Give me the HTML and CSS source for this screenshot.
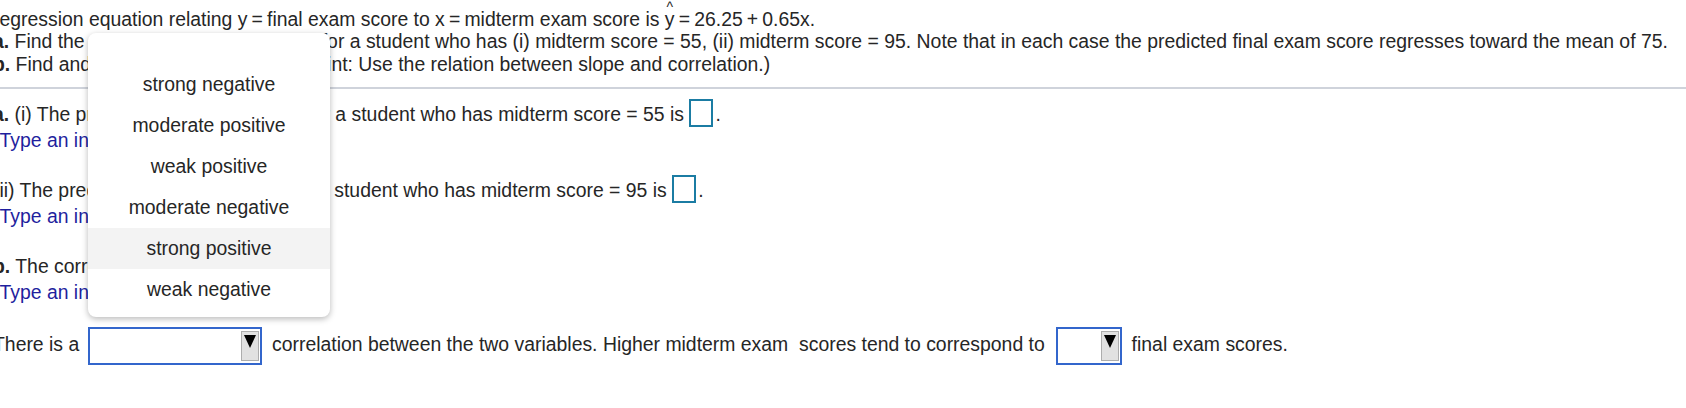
FILE: index.html
```html
<!DOCTYPE html>
<html>
<head>
  <meta charset="UTF-8">
  <title>Regression and correlation</title>
  <link rel="stylesheet" href="styles.css">
</head>
<body>
  <div class="page">
    <div class="intro">
      <div>regression equation relating y<span class="op"> = </span>final exam score to x<span class="op"> = </span>midterm exam score is <span class="yhat">y<span class="hat">^</span></span><span class="op"> = </span>26.25<span class="op"> + </span>0.65x.</div>
      <div><b>a.</b> Find the predicted final exam score for a student who has (i) midterm score = 55, (ii) midterm score = 95. Note that in each case the predicted final exam score regresses toward the mean of 75.</div>
      <div><b>b.</b> Find and interpret the correlation. (Hint: Use the relation between slope and correlation.)</div>
    </div>
    <div class="rule"></div>

    <div class="part">
      <div><b>a.</b> (i) The predicted final exam score for a student who has midterm score = 55 is <span class="answer"></span>.</div>
      <div class="hint">(Type an integer or a decimal.)</div>
    </div>
    <div class="part">
      <div>(ii) The predicted final exam score for a student who has midterm score = 95 is <span class="answer"></span>.</div>
      <div class="hint">(Type an integer or a decimal.)</div>
    </div>
    <div class="part">
      <div><b>b.</b> The correlation is <span class="answer"></span>.</div>
      <div class="hint">(Type an integer or a decimal.)</div>
    </div>

    <div class="blanks">
      There is a
      <span class="select wide">
        <span class="select-btn">
          <svg width="12" height="13" viewBox="0 0 12 13"><polygon points="0,0 12,0 6,13" fill="#000"/></svg>
        </span>
      </span>
      correlation between the two variables. Higher midterm exam&nbsp; scores tend to correspond to
      <span class="select narrow">
        <span class="select-btn">
          <svg width="12" height="13" viewBox="0 0 12 13"><polygon points="0,0 12,0 6,13" fill="#000"/></svg>
        </span>
      </span>
      final exam scores.
    </div>
  </div>

  <div class="listbox">
    <div class="option">strong negative</div>
    <div class="option">moderate positive</div>
    <div class="option">weak positive</div>
    <div class="option">moderate negative</div>
    <div class="option active">strong positive</div>
    <div class="option">weak negative</div>
  </div>
</body>
</html>
```

FILE: styles.css
```css
body {
  margin: 0;
  position: relative;
  font-family: "Liberation Sans", Arial, sans-serif;
  font-size: 19.4px;
  color: #262626;
  background-color: #fff;
}

.page {
  margin-left: -7px;
  white-space: nowrap;
}

.intro {
  padding-top: 7.5px;
  line-height: 22.5px;
}

/* math operators sit a little tighter than words */
.op {
  word-spacing: -1.25px;
}

.yhat {
  position: relative;
}

.hat {
  position: absolute;
  left: 50%;
  top: -8px;
  transform: translateX(-50%);
  font-size: 14px;
  line-height: 14px;
}

.rule {
  height: 2px;
  margin-top: 12px;
  background-color: #cfd3db;
}

.part {
  line-height: 26px;
  margin-top: 24px;
}

.rule + .part {
  margin-top: 12.3px;
}

.hint {
  color: #1f1f9e;
}

.answer {
  display: inline-block;
  box-sizing: border-box;
  width: 24px;
  height: 28px;
  margin: -3px 2px 0 0;
  border: 2px solid #1b7ca3;
  vertical-align: -6px;
}

.blanks {
  line-height: 26px;
  margin-top: 21.7px;
}

.select {
  display: inline-flex;
  justify-content: flex-end;
  box-sizing: border-box;
  height: 38px;
  margin: 0 4.6px 0 3.4px;
  padding: 2px 1px 2px 0;
  border: 2px solid #3366cc;
  background-color: #fff;
  vertical-align: middle;
}

.select.wide {
  width: 174px;
}

.select.narrow {
  width: 66px;
  margin-left: 5.5px;
}

.select-btn {
  display: flex;
  justify-content: center;
  box-sizing: border-box;
  width: 18px;
  height: 30px;
  padding-top: 3px;
  border: 1px solid #adadad;
  background-color: #e1e1e1;
}

.listbox {
  position: absolute;
  left: 88px;
  top: 33px;
  width: 242px;
  box-sizing: border-box;
  padding: 30.5px 0 7px;
  border-radius: 8px;
  background-color: #fff;
  box-shadow: 0 2px 6px rgba(0, 0, 0, 0.28);
}

.option {
  height: 41px;
  line-height: 41px;
  text-align: center;
}

.option.active {
  background-color: #f3f3f3;
}
```
